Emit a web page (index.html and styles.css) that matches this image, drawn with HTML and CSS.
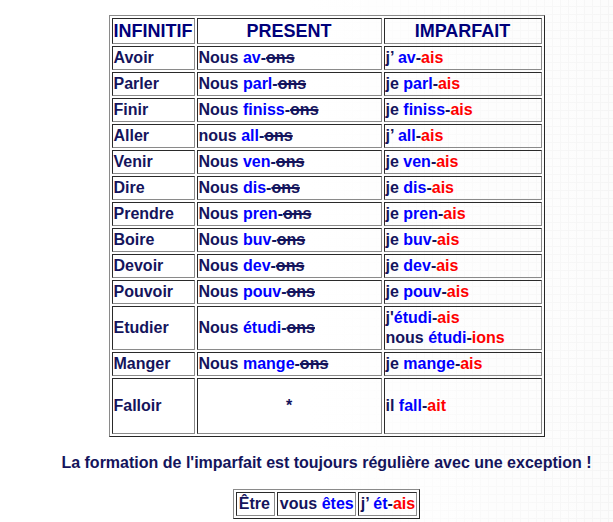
FILE: index.html
```html
<!DOCTYPE html>
<html lang="fr">
<head>
<meta charset="utf-8">
<title>Imparfait</title>
<link rel="stylesheet" href="styles.css">
</head>
<body>
<div class="page">
  <table class="conj">
    <thead>
      <tr class="head">
        <th class="c1 left">INFINITIF</th>
        <th class="c2">PRESENT</th>
        <th class="c3">IMPARFAIT</th>
      </tr>
    </thead>
    <tbody>
      <tr><td>Avoir</td><td>Nous <span class="b">av</span>-<s>ons</s></td><td>j’ <span class="b">av</span>-<span class="r">ais</span></td></tr>
      <tr><td>Parler</td><td>Nous <span class="b">parl</span>-<s>ons</s></td><td>je <span class="b">parl</span>-<span class="r">ais</span></td></tr>
      <tr><td>Finir</td><td>Nous <span class="b">finiss</span>-<s>ons</s></td><td>je <span class="b">finiss</span>-<span class="r">ais</span></td></tr>
      <tr><td>Aller</td><td>nous <span class="b">all</span>-<s>ons</s></td><td>j’ <span class="b">all</span>-<span class="r">ais</span></td></tr>
      <tr><td>Venir</td><td>Nous <span class="b">ven</span>-<s>ons</s></td><td>je <span class="b">ven</span>-<span class="r">ais</span></td></tr>
      <tr><td>Dire</td><td>Nous <span class="b">dis</span>-<s>ons</s></td><td>je <span class="b">dis</span>-<span class="r">ais</span></td></tr>
      <tr><td>Prendre</td><td>Nous <span class="b">pren</span>-<s>ons</s></td><td>je <span class="b">pren</span>-<span class="r">ais</span></td></tr>
      <tr><td>Boire</td><td>Nous <span class="b">buv</span>-<s>ons</s></td><td>je <span class="b">buv</span>-<span class="r">ais</span></td></tr>
      <tr><td>Devoir</td><td>Nous <span class="b">dev</span>-<s>ons</s></td><td>je <span class="b">dev</span>-<span class="r">ais</span></td></tr>
      <tr><td>Pouvoir</td><td>Nous <span class="b">pouv</span>-<s>ons</s></td><td>je <span class="b">pouv</span>-<span class="r">ais</span></td></tr>
      <tr class="tall"><td>Etudier</td><td>Nous <span class="b">étudi</span>-<s>ons</s></td><td>j'<span class="b">étudi</span>-<span class="r">ais</span><br>nous <span class="b">étudi</span>-<span class="r">ions</span></td></tr>
      <tr><td>Manger</td><td>Nous <span class="b">mange</span>-<s>ons</s></td><td>je <span class="b">mange</span>-<span class="r">ais</span></td></tr>
      <tr class="taller"><td>Falloir</td><td class="center">*</td><td>il <span class="b">fall</span>-<span class="r">ait</span></td></tr>
    </tbody>
  </table>

  <p class="note">La formation de l'imparfait est toujours régulière avec une exception !</p>

  <table class="conj small">
    <tbody>
      <tr>
        <td class="s1">Être</td>
        <td class="s2">vous <span class="b">êtes</span></td>
        <td class="s3">j’ <span class="b">ét</span>-<span class="r">ais</span></td>
      </tr>
    </tbody>
  </table>
</div>
</body>
</html>
```

FILE: styles.css
```css
html {
  background-color: #fbfbfb;
  background-image:
    linear-gradient(to right, #ffffff 0%, #ffffff 50%, rgba(255,255,255,0.6) 80%, rgba(255,255,255,0.3) 100%),
    repeating-linear-gradient(0deg, #f1f1f1 0 1px, transparent 1px 8px),
    repeating-linear-gradient(90deg, #f1f1f1 0 1px, transparent 1px 8px);
  overflow: hidden;
}

body {
  margin: 8px;
  font-family: "Liberation Sans", Arial, sans-serif;
  font-weight: bold;
  font-size: 16px;
  color: #14145c;
}

.page {
  padding-left: 40px;
  padding-top: 7px;
  text-align: center;
}

.conj {
  border-collapse: separate;
  border-spacing: 2px;
  border: 1px solid;
  border-color: #8a8a8a #262626 #262626 #8a8a8a;
  table-layout: fixed;
  margin: 0 auto;
  text-align: left;
}

.conj th,
.conj td {
  box-sizing: border-box;
  border: 1px solid;
  border-color: #2a2a2a #8a8a8a #8a8a8a #2a2a2a;
  padding: 1px;
  line-height: 20px;
  height: 24px;
  vertical-align: middle;
  white-space: nowrap;
}

.conj th {
  font-size: 18px;
  line-height: 22px;
  height: 26px;
  color: #00007a;
  text-align: center;
}

.conj th.left {
  text-align: left;
}

.c1 { width: 83px; }
.c2 { width: 185px; }
.c3 { width: 158px; }

.conj tr.tall td { height: 44px; }
.conj tr.taller td { height: 56px; }

.conj td.center { text-align: center; }

.b { color: #0000ff; }
.r { color: #ff0000; }

s {
  text-decoration-thickness: 2px;
}

.note {
  margin: 17px 0;
  line-height: 18px;
  color: #14145c;
}

.small td { padding-left: 2px; }
.s1 { width: 39px; }
.s2 { width: 79px; }
.s3 { width: 58px; }
```
